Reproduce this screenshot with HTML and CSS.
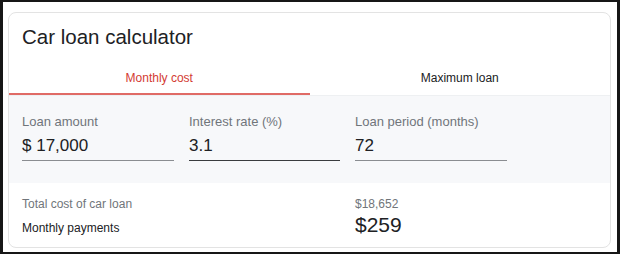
FILE: index.html
```html
<!DOCTYPE html>
<html>
  <head>
    <meta name="viewport" content="width=device-width, initial-scale=1" />
    <link rel="stylesheet" href="styles.css">
  </head>
  <body>
    <div class="frame">
      <div class="card">
        <div class="title">Car loan calculator</div>
        <div class="tabs">
          <div class="tab active">Monthly cost</div>
          <div class="tab">Maximum loan</div>
        </div>
        <div class="inputs">
          <div class="field">
            <div class="field-label">Loan amount</div>
            <div class="field-value">$ 17,000</div>
          </div>
          <div class="field focused">
            <div class="field-label">Interest rate (%)</div>
            <div class="field-value">3.1</div>
          </div>
          <div class="field">
            <div class="field-label">Loan period (months)</div>
            <div class="field-value">72</div>
          </div>
        </div>
        <div class="results">
          <div class="result-row">
            <span class="result-label muted">Total cost of car loan</span>
            <span class="muted">$18,652</span>
          </div>
          <div class="result-row">
            <span class="result-label">Monthly payments</span>
            <span class="big">$259</span>
          </div>
        </div>
      </div>
    </div>
    <div class="feedback">Feedback</div>
  </body>
</html>
```

FILE: styles.css
```css
body {
  margin: 0;
  background: #ffffff;
  font-family: "Liberation Sans", Arial, sans-serif;
  color: #202124;
}

.frame {
  border-style: solid;
  border-color: #161616;
  border-width: 2px 3px 2px 3px;
  padding: 10px 6px 0px 5px;
  box-sizing: border-box;
  width: 620px;
  height: 254px;
}

.card {
  border: 1px solid #e3e3e3;
  border-radius: 8px;
  height: 236px;
  box-sizing: border-box;
  overflow: hidden;
  background: #fff;
}

.title {
  font-size: 20.5px;
  line-height: 24px;
  padding: 12px 0px 0px 13px;
}

.tabs {
  display: flex;
  margin-top: 21px;
}

.tab {
  flex: 1;
  text-align: center;
  font-size: 12px;
  line-height: 16px;
  padding-bottom: 7px;
  border-bottom: 2px solid transparent;
}

.tab.active {
  color: #d33b32;
  border-bottom-color: #e06b66;
}

.inputs {
  background: #f7f8fa;
  display: flex;
  gap: 15px;
  padding: 18px 13px 22px 13px;
  border-top: 1px solid #eef0f2;
}

.field {
  width: 152px;
  border-bottom: 1px solid #8a8d91;
}

.field.focused {
  width: 151px;
  border-bottom-color: #3a3c3f;
}

.field-label {
  font-size: 13px;
  line-height: 16px;
  color: #70757a;
}

.field-value {
  font-size: 17px;
  line-height: 20px;
  margin-top: 6px;
  padding-bottom: 4px;
  color: #202124;
}

.results {
  padding: 14px 13px 0px 13px;
}

.result-row {
  display: flex;
  align-items: baseline;
  font-size: 12px;
  line-height: 14px;
}

.result-row + .result-row {
  margin-top: 2px;
}

.result-label {
  width: 333px;
}

.muted {
  color: #70757a;
}

.big {
  font-size: 21px;
  line-height: 24px;
  color: #202124;
}

.feedback {
  text-align: right;
  font-size: 11px;
  color: #70757a;
  padding: 1px 22px 0px 0px;
}
```
